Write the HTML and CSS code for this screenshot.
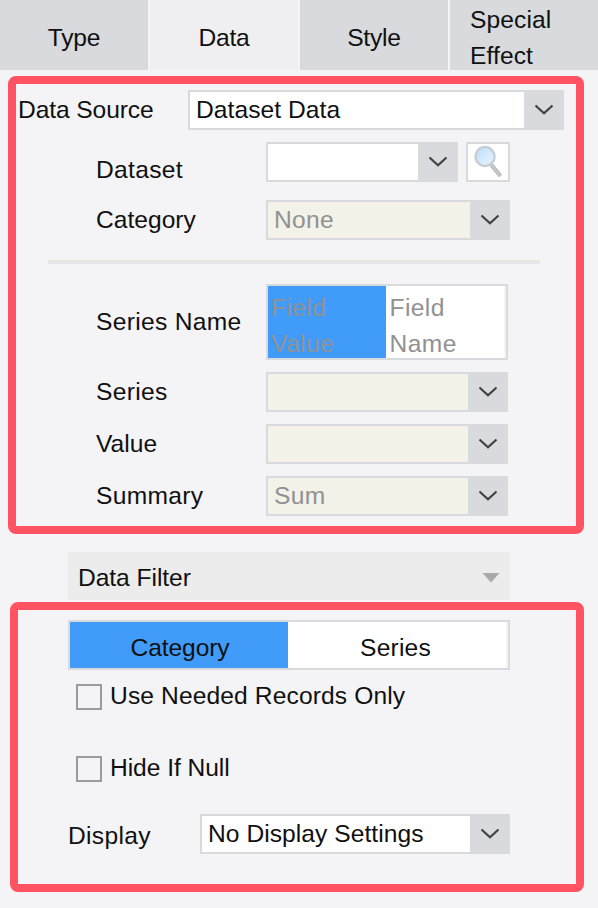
FILE: index.html
```
<!DOCTYPE html>
<html lang="en">
<head>
<meta charset="utf-8">
<title>Chart Data</title>
<link rel="stylesheet" href="styles.css">
</head>
<body>
<svg class="defs" width="0" height="0">
  <symbol id="chevron" viewBox="0 0 20 12"><path d="M1.5 1.5 L10 9.3 L18.5 1.5" fill="none" stroke="#414244" stroke-width="2.2"/></symbol>
</svg>
<nav class="tabs">
  <div class="tab"><span>Type</span></div>
  <div class="tab active"><span>Data</span></div>
  <div class="tab"><span>Style</span></div>
  <div class="tab wrap"><span>Special Effect</span></div>
</nav>

<section class="panel source">
  <div class="row first">
    <label class="label">Data Source</label>
    <div class="select"><span class="value">Dataset Data</span><span class="arrow"><svg><use href="#chevron"/></svg></span></div>
  </div>
  <div class="row dataset">
    <label class="label">Dataset</label>
    <div class="select"><span class="value"></span><span class="arrow"><svg><use href="#chevron"/></svg></span></div>
    <button class="search">
      <svg width="40" height="36" viewBox="0 0 40 36">
        <defs><linearGradient id="lens" x1="0" y1="0" x2="1" y2="1"><stop offset="0" stop-color="#bddcfa"/><stop offset="1" stop-color="#eaf6ff"/></linearGradient></defs>
        <path d="M23 20.5 L32.5 32" stroke="#b5b5b5" stroke-width="4"/>
        <path d="M23 20.5 L32 31.5" stroke="#d0d0d0" stroke-width="1.4"/>
        <circle cx="17" cy="12.5" r="9.5" fill="url(#lens)" stroke="#c9ced4" stroke-width="2.4"/>
      </svg>
    </button>
  </div>
  <div class="row category">
    <label class="label plain">Category</label>
    <div class="select disabled"><span class="value">None</span><span class="arrow"><svg><use href="#chevron"/></svg></span></div>
  </div>
  <hr class="divider">
  <div class="row names">
    <label class="label">Series Name</label>
    <div class="toggle muted"><span class="option on">Field Value</span><span class="option">Field Name</span></div>
  </div>
  <div class="row">
    <label class="label">Series</label>
    <div class="select disabled"><span class="value"></span><span class="arrow"><svg><use href="#chevron"/></svg></span></div>
  </div>
  <div class="row">
    <label class="label plain">Value</label>
    <div class="select disabled"><span class="value"></span><span class="arrow"><svg><use href="#chevron"/></svg></span></div>
  </div>
  <div class="row">
    <label class="label">Summary</label>
    <div class="select disabled"><span class="value">Sum</span><span class="arrow"><svg><use href="#chevron"/></svg></span></div>
  </div>
</section>

<header class="filter-head">
  <span>Data Filter</span>
  <svg width="18" height="10" viewBox="0 0 18 10"><path d="M0.5 0 H17.5 L9 9.5 Z" fill="#a9a9a9"/></svg>
</header>

<section class="panel filter">
  <div class="toggle big"><span class="option on">Category</span><span class="option">Series</span></div>
  <label class="check"><i class="box"></i><span>Use Needed Records Only</span></label>
  <label class="check second"><i class="box"></i><span>Hide If Null</span></label>
  <div class="row display">
    <label class="label">Display</label>
    <div class="select"><span class="value">No Display Settings</span><span class="arrow"><svg><use href="#chevron"/></svg></span></div>
  </div>
</section>
</body>
</html>
```
FILE: styles.css
```
* { box-sizing: border-box; }
body {
  margin: 0;
  width: 598px;
  height: 908px;
  overflow: hidden;
  background: #f4f4f6;
  color: #101010;
  font: 24.6px/36px "Liberation Sans", Arial, sans-serif;
}
.defs { position: absolute; }
.tabs { display: grid; grid-template: 70px / repeat(4, 148px); gap: 2px; }
.tab { display: flex; align-items: center; justify-content: center; background: #d8dadd; padding-top: 6px; letter-spacing: -0.2px; }
.tab.active { background: #efeff1; }
.tab.wrap { justify-content: flex-start; align-items: flex-start; padding: 2px 40px 0 20px; letter-spacing: 0.1px; }
.panel { border: 8px solid #ff5263; border-radius: 8px; }
.source { margin: 6px 0 0 8px; width: 576px; height: 458px; padding-top: 6px; }
.row { display: flex; align-items: center; height: 40px; margin-bottom: 12px; padding-left: 80px; }
.label { flex: none; width: 170px; white-space: nowrap; letter-spacing: 0.3px; }
.label.plain { letter-spacing: 0; }
.select { display: flex; width: 242px; height: 40px; border: 2px solid #d8dadd; background: #fff; }
.select .value { flex: 1; padding-left: 6px; white-space: nowrap; letter-spacing: 0.05px; }
.select.disabled .value { background: #f2f2e9; color: #919191; letter-spacing: 0.3px; }
.arrow { display: flex; align-items: center; justify-content: center; width: 38px; background: #d8dadd; }
.arrow svg { display: block; width: 20px; height: 12px; margin: 0 0 0 2px; }
.first { padding-left: 2px; }
.first .label { letter-spacing: -0.1px; }
.first .select { width: 376px; }
.dataset { margin-bottom: 18px; }
.dataset .label { padding-top: 16px; }
.dataset .select { width: 192px; }
.search { width: 44px; height: 40px; margin-left: 8px; padding: 0; border: 2px solid #d8dadd; background: #fff; }
.search svg { display: block; }
.category { margin-bottom: 20px; }
.category .select { width: 244px; }
.divider { width: 492px; height: 4px; margin: 0 0 20px 32px; border: 0; border-top: 2px solid #e8e8dd; background: #e6e7ea; }
.toggle { display: flex; background: #fff; border: 2px solid #d8dadd; box-shadow: inset -2px 0 #f4f4f6; }
.toggle .option { flex: 1; }
.toggle .on { background: #409bf9; }
.names { height: 76px; }
.muted { width: 242px; height: 76px; color: #919191; padding-right: 2px; letter-spacing: 0.4px; }
.muted .option { padding: 4px 38px 0 4px; height: 72px; }
.muted .on { padding-left: 3px; }
.filter-head { display: flex; align-items: center; justify-content: space-between; width: 442px; height: 48px; margin: 18px 0 2px 68px; padding: 3px 10px 0 10px; background: #ececec; letter-spacing: -0.05px; }
.filter { margin-left: 10px; width: 574px; height: 290px; padding: 10px 0 0 50px; }
.big { width: 442px; height: 50px; padding-right: 2px; }
.big .option { display: flex; align-items: center; justify-content: center; padding-top: 6px; }
.big .on { flex: 0 0 218px; padding-left: 2px; letter-spacing: -0.1px; }
.big .option + .option { padding-right: 3px; letter-spacing: 0.2px; }
.check { display: flex; align-items: center; height: 26px; margin: 14px 0 0 8px; }
.check span { margin: -2px 0 0 8px; letter-spacing: 0.12px; }
.box { width: 26px; height: 26px; border: 2px solid #9b9b9b; background: #f4f4f6; }
.second { margin-top: 46px; }
.second span { letter-spacing: -0.05px; }
.display { margin: 32px 0 0; padding: 0; }
.display .label { width: 132px; padding-top: 4px; }
.display .select { width: 310px; }
```
